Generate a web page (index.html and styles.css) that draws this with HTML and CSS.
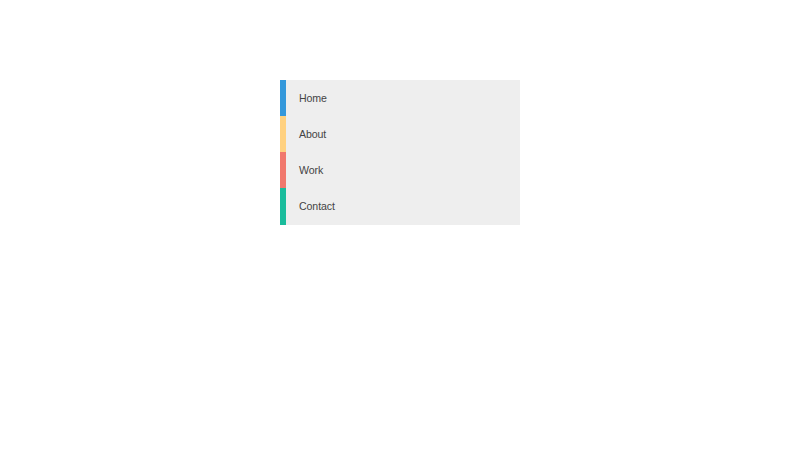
FILE: index.html
```
<!DOCTYPE html>
<html>
<head>
<meta charset="utf-8">
<link rel="stylesheet" href="styles.css">
</head>
<body>
<ul class="menu">
  <li class="item item-blue">Home</li>
  <li class="item item-yellow">About</li>
  <li class="item item-red">Work</li>
  <li class="item item-teal">Contact</li>
</ul>
</body>
</html>
```
FILE: styles.css
```
html, body {
  margin: 0;
  padding: 0;
  background: #fff;
}
body {
  padding-top: 80px;
  font-family: "Liberation Sans", Arial, sans-serif;
}
.menu {
  list-style: none;
  margin: 0 auto;
  padding: 0;
  width: 240px;
  background: #eeeeee;
}
.item {
  box-sizing: border-box;
  height: 36px;
  padding: 1px 0 0 13px;
  line-height: 35px;
  border-left: 6px solid transparent;
  font-size: 10.6px;
  letter-spacing: -0.1px;
  color: #444;
}
.item-teal { height: 37px; line-height: 35px; }
.item-blue { border-left-color: #3498db; }
.item-yellow { border-left-color: #ffd180; }
.item-red { border-left-color: #f1786d; }
.item-teal { border-left-color: #1abc9c; }
```
